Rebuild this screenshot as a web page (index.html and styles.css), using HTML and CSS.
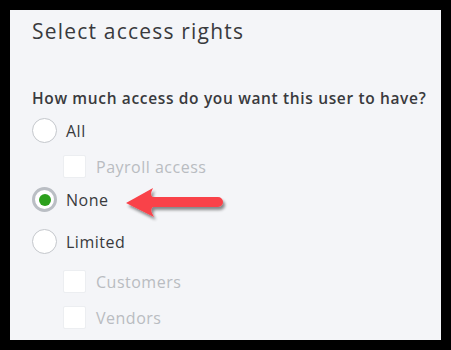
FILE: index.html
```html
<!DOCTYPE html>
<html>
<head>
<meta charset="utf-8">
<link rel="stylesheet" href="styles.css">
</head>
<body>
<div class="panel">
  <h1 class="title">Select access rights</h1>
  <p class="question">How much access do you want this user to have?</p>
  <div class="row radio-row r-all"><span class="radio"></span><span class="label">All</span></div>
  <div class="row check-row c-payroll"><span class="check"></span><span class="label dim">Payroll access</span></div>
  <div class="row radio-row r-none"><span class="radio selected"><span class="dot"></span></span><span class="label">None</span></div>
  <div class="row radio-row r-limited"><span class="radio"></span><span class="label">Limited</span></div>
  <div class="row check-row c-customers"><span class="check"></span><span class="label dim">Customers</span></div>
  <div class="row check-row c-vendors"><span class="check"></span><span class="label dim">Vendors</span></div>
  <svg class="arrow" width="110" height="40" viewBox="0 0 110 40">
    <defs>
      <filter id="sh" x="-20%" y="-30%" width="140%" height="170%">
        <feGaussianBlur in="SourceAlpha" stdDeviation="1.6"/>
        <feOffset dx="2" dy="3" result="b"/>
        <feComponentTransfer><feFuncA type="linear" slope="0.45"/></feComponentTransfer>
        <feMerge><feMergeNode/><feMergeNode in="SourceGraphic"/></feMerge>
      </filter>
    </defs>
    <g filter="url(#sh)">
      <path d="M6 17 L33 2 Q29 10 33 11 L98 11 A5 5 0 0 1 98 21 L33 21 Q29 23 34 31 Z" fill="#f9424a"/>
    </g>
  </svg>
</div>
</body>
</html>
```
FILE: styles.css
```css
html, body {
  margin: 0;
  padding: 0;
  background: #000;
}
body {
  width: 451px;
  height: 350px;
  padding: 10px;
  box-sizing: border-box;
}
.panel {
  position: relative;
  width: 431px;
  height: 330px;
  background: #f4f5f8;
  padding: 0 0 0 22px;
  box-sizing: border-box;
  display: flex;
  flex-direction: column;
  font-family: "Open Sans", Lato, sans-serif;
  color: #393a3d;
  overflow: hidden;
}
.title {
  margin: 7px 0 0 0;
  font-size: 21px;
  font-weight: 400;
  line-height: 28px;
  letter-spacing: 1.2px;
}
.question {
  margin: 43px 0 0 0;
  font-size: 15.5px;
  font-weight: 600;
  line-height: 20px;
  letter-spacing: 0.65px;
  white-space: nowrap;
}
.row {
  display: flex;
  align-items: center;
}
.label {
  font-size: 16px;
  line-height: 20px;
  letter-spacing: 0.5px;
}
.label.dim {
  color: #b9bcc1;
}
.radio-row .label { margin-left: 9px; }
.check-row { padding-left: 31px; }
.check-row .label { margin-left: 10px; }
.radio {
  width: 25px;
  height: 25px;
  box-sizing: border-box;
  border: 1px solid #c4c7cc;
  border-radius: 50%;
  background: #fff;
  display: flex;
  align-items: center;
  justify-content: center;
  flex: none;
}
.radio.selected {
  border: 3px solid #babec4;
}
.dot {
  width: 12px;
  height: 12px;
  border-radius: 50%;
  background: #2ca01c;
}
.check {
  width: 23px;
  height: 23px;
  box-sizing: border-box;
  background: #fff;
  border: 1px solid #eceef1;
  border-radius: 2px;
  flex: none;
}
.r-all { margin-top: 10px; }
.c-payroll { margin-top: 12px; }
.r-none { margin-top: 9px; }
.r-limited { margin-top: 17px; }
.c-customers { margin-top: 16px; }
.c-vendors { margin-top: 13px; }
.arrow {
  position: absolute;
  left: 110px;
  top: 176px;
}
```
